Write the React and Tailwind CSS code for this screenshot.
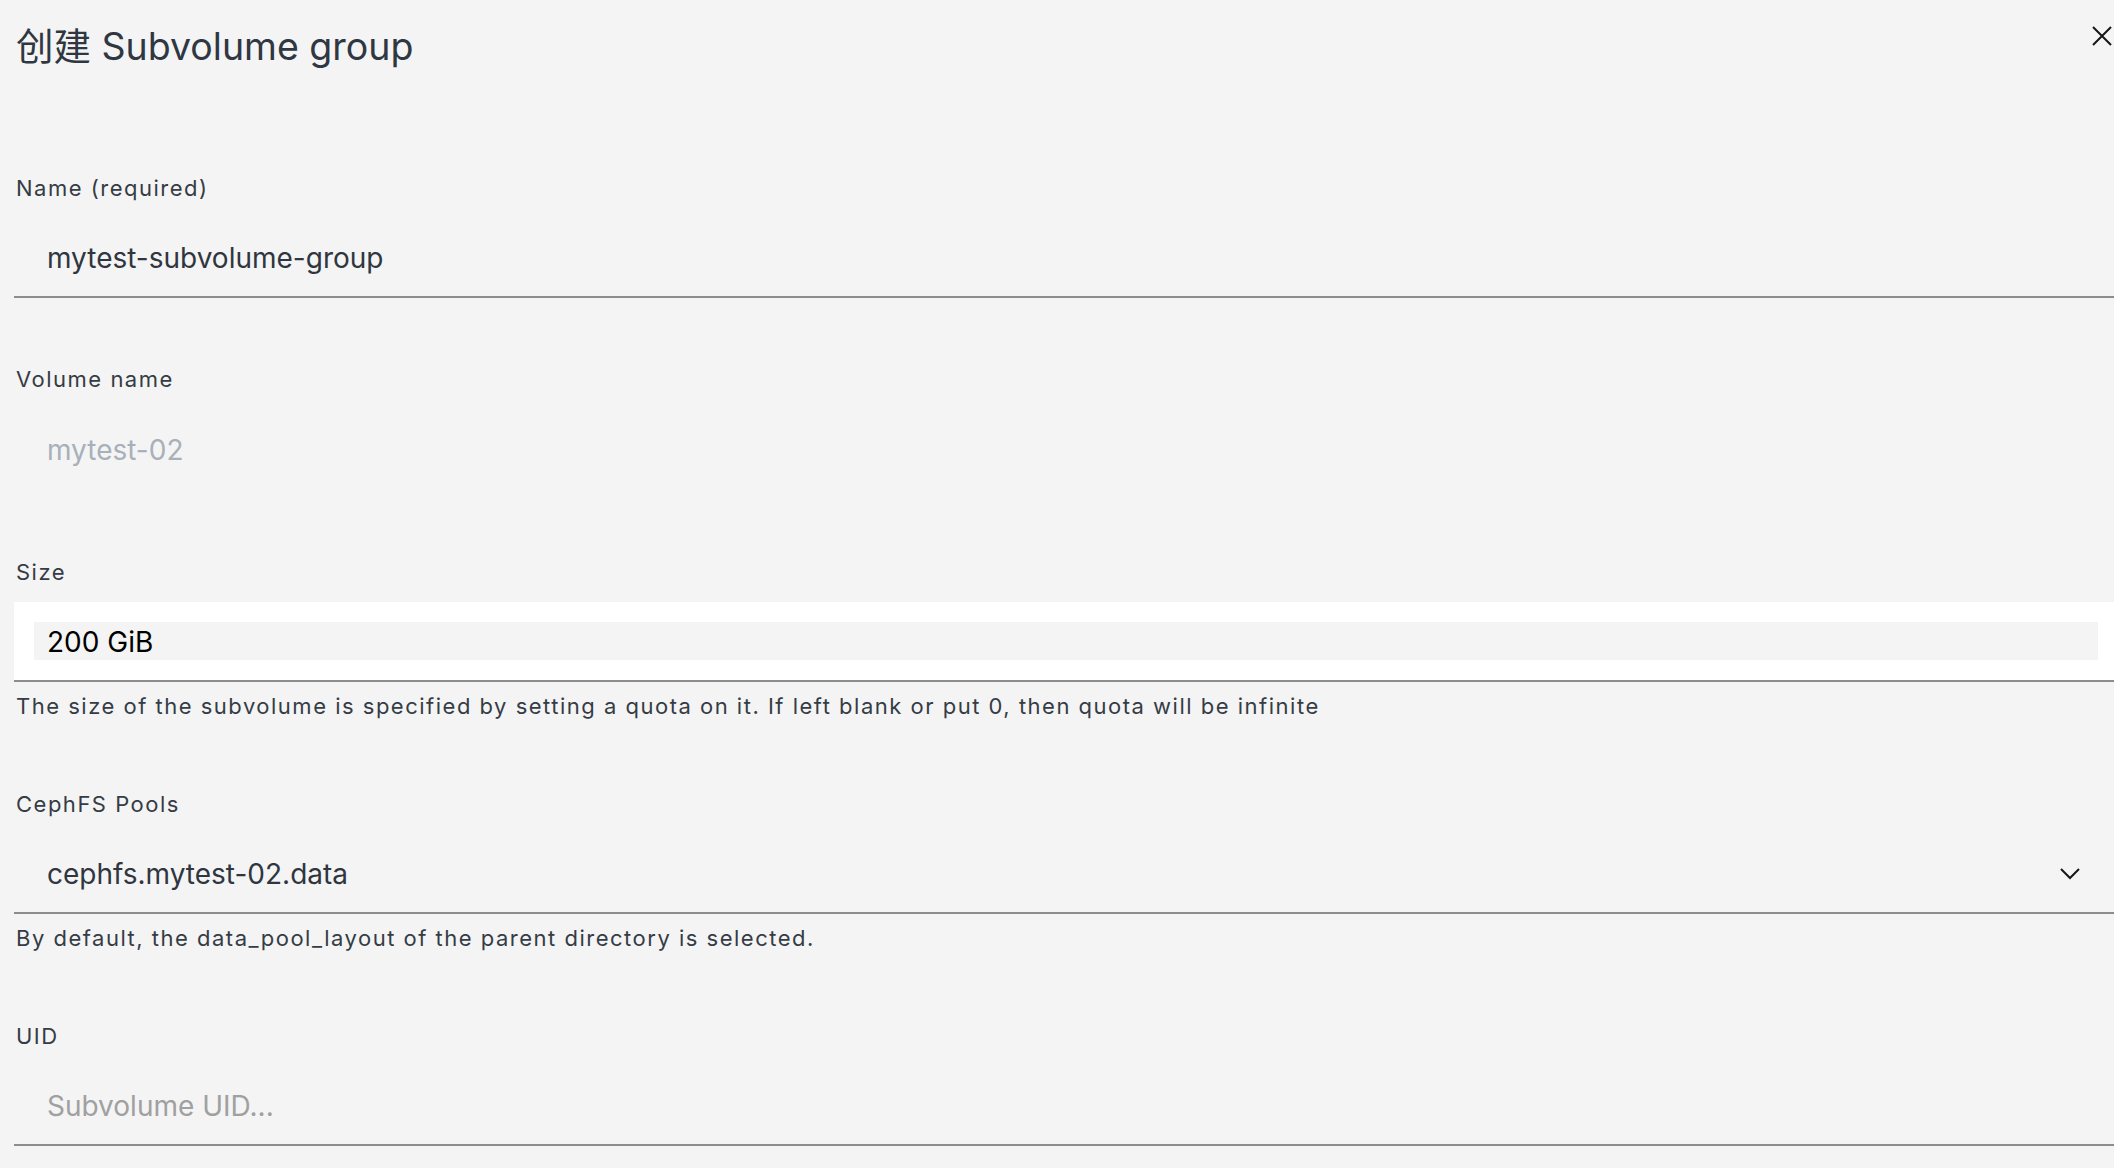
import React from 'react'

const label = 'h-[24px] pl-[2px] pt-[2px] text-[22px] leading-[24px] tracking-[1.5px] text-[#353c45]'
const helper = 'mt-[11px] h-[24px] pl-[2px] pt-[1px] text-[22px] leading-[24px] tracking-[1.5px] text-[#353c45]'
const field = 'mt-[20px] flex h-[80px] items-center pl-[33px] pt-[2px] text-[28px]'

export default function App() {
    return (
        <div
            className="relative h-[1168px] w-[2114px] overflow-hidden bg-[#f4f4f4]"
            style={{ fontFamily: 'Inter, "Noto Sans CJK SC", sans-serif' }}
        >
            <button className="absolute right-[2px] top-[26px] flex h-[20px] w-[20px] items-center justify-center text-[#161616]">
                <svg width="20" height="20" viewBox="0 0 20 20" fill="none" stroke="currentColor" strokeWidth="2">
                    <path d="M1 1 L19 19 M19 1 L1 19" />
                </svg>
            </button>

            <div className="pl-[14px]">
                <h1 className="mt-[23px] h-[48px] pl-[2px] text-[37.5px] leading-[48px] text-[#2f3742]">
                    创建 Subvolume group
                </h1>

                <div className={'mt-[103px] ' + label}>Name (required)</div>
                <div className={field + ' border-b-2 border-[#8d8d8d] text-[#2f3640]'}>mytest-subvolume-group</div>

                <div className={'mt-[67px] ' + label}>Volume name</div>
                <div className={field + ' text-[#a8b0ba]'}>mytest-02</div>

                <div className={'mt-[69px] ' + label}>Size</div>
                <div className="mt-[20px] h-[80px] border-b-2 border-[#8d8d8d] bg-white py-[20px] pl-[20px] pr-[16px]">
                    <div className="flex h-[38px] items-center bg-[#f4f4f4] pl-[13px] pt-[2px] text-[28px] text-black">200 GiB</div>
                </div>
                <div className={helper}>
                    The size of the subvolume is specified by setting a quota on it. If left blank or put 0, then quota will be infinite
                </div>

                <div className={'mt-[73px] ' + label}>CephFS Pools</div>
                <div className={field + ' justify-between border-b-2 border-[#8d8d8d] pr-[34px] text-[#2f3640]'}>
                    <span>cephfs.mytest-02.data</span>
                    <svg width="20" height="12" viewBox="0 0 20 12" fill="none" stroke="#161616" strokeWidth="2">
                        <path d="M1 1 L10 10 L19 1" />
                    </svg>
                </div>
                <div className={helper}>By default, the data_pool_layout of the parent directory is selected.</div>

                <div className={'mt-[73px] ' + label}>UID</div>
                <div className={field + ' border-b-2 border-[#8d8d8d] text-[#a0a0a0]'}>Subvolume UID...</div>
            </div>
        </div>
    )
}
